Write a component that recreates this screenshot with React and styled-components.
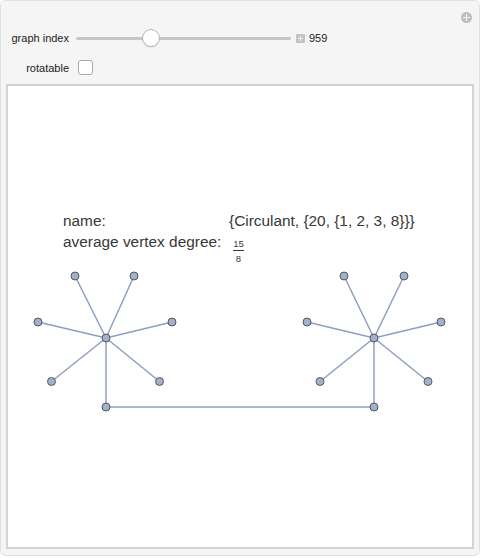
import React from "react";
import styled, { createGlobalStyle } from "styled-components";

const Global = createGlobalStyle`
  html, body { margin: 0; padding: 0; background: #ffffff; }
  body { font-family: "Liberation Sans", Arial, sans-serif; }
  * { box-sizing: border-box; }
`;

const Panel = styled.div`
  position: relative;
  width: 480px;
  height: 556px;
  border: 1px solid #e0e0e0;
  border-radius: 6px;
  background: #f5f5f5;
  padding-top: 28px;
  display: flex;
  flex-direction: column;
`;

const CloseIcon = styled.div`
  position: absolute;
  top: 11px;
  right: 7px;
  width: 11px;
  height: 11px;
  border-radius: 50%;
  background: #bdbdbd;
  display: flex;
  align-items: center;
  justify-content: center;
  &::before, &::after {
    content: "";
    position: absolute;
    background: #ffffff;
  }
  &::before { width: 7px; height: 1.6px; }
  &::after { width: 1.6px; height: 7px; }
`;

const ControlRow = styled.div`
  display: flex;
  align-items: center;
  height: ${(p) => p.$h}px;
  margin-bottom: ${(p) => p.$mb || 0}px;
`;

const Label = styled.div`
  width: 68px;
  text-align: right;
  font-size: 11px;
  color: #222;
`;

const Track = styled.div`
  position: relative;
  margin-left: 7px;
  width: 215px;
  height: 3px;
  border-radius: 2px;
  background: #c6c6c6;
`;

const Thumb = styled.div`
  position: absolute;
  top: 50%;
  width: 18px;
  height: 18px;
  margin-top: -9px;
  border-radius: 50%;
  background: #ffffff;
  border: 1px solid #b5b5b5;
  box-shadow: 0 1px 1px rgba(0, 0, 0, 0.08);
`;

const PlusBox = styled.div`
  position: relative;
  margin-left: 5px;
  width: 9px;
  height: 9px;
  border-radius: 1px;
  background: #c4c4c4;
  display: flex;
  align-items: center;
  justify-content: center;
  &::before, &::after {
    content: "";
    position: absolute;
    background: #f2f2f2;
  }
  &::before { width: 5px; height: 1px; }
  &::after { width: 1px; height: 5px; }
`;

const Value = styled.div`
  margin-left: 4px;
  font-size: 11px;
  color: #222;
`;

const Checkbox = styled.div`
  margin-left: 9px;
  width: 15px;
  height: 15px;
  border-radius: 3px;
  border: 1px solid #a9a9a9;
  background: #ffffff;
`;

const Output = styled.div`
  margin: 0 5px;
  height: 465px;
  border: 2px solid #d4d4d4;
  border-top-color: #d0d0d0;
  background: #ffffff;
  display: flex;
  flex-direction: column;
`;

const Info = styled.div`
  margin-top: 124px;
  margin-left: 55px;
  display: grid;
  grid-template-columns: 166px auto;
  grid-auto-rows: 21px;
  font-size: 15.4px;
  line-height: 21px;
  color: #383838;
`;

const Fraction = styled.div`
  display: inline-flex;
  flex-direction: column;
  align-items: center;
  margin-left: 4px;
  padding-top: 3px;
  font-size: 9.5px;
  line-height: 9px;
  width: 11px;
`;

const Bar = styled.div`
  align-self: stretch;
  height: 1px;
  background: #383838;
  margin: 2px 0 3px;
`;

const Graph = styled.svg`
  display: block;
  margin-top: 10px;
`;

const left = {
  c: [106, 338],
  leaves: [[75, 276], [134, 276], [38, 322], [172, 322], [51.5, 381.5], [159.5, 381.5]],
  b: [106, 407],
};
const right = {
  c: [374, 338],
  leaves: [[344, 276], [404, 276], [307, 322], [441, 322], [320, 381.5], [428, 381.5]],
  b: [374, 407],
};

function Star({ s }) {
  return (
    <g>
      {s.leaves.map((p, i) => (
        <line key={i} x1={s.c[0]} y1={s.c[1]} x2={p[0]} y2={p[1]} />
      ))}
      <line x1={s.c[0]} y1={s.c[1]} x2={s.b[0]} y2={s.b[1]} />
    </g>
  );
}

function Nodes({ s }) {
  const pts = [s.c, s.b, ...s.leaves];
  return pts.map((p, i) => <circle key={i} cx={p[0]} cy={p[1]} r={4} />);
}

export default function App() {
  const frac = 0.307;
  return (
    <>
      <Global />
      <Panel>
        <CloseIcon />
        <ControlRow $h={18} $mb={13}>
          <Label>graph index</Label>
          <Track>
            <Thumb style={{ left: `${frac * 215}px` }} />
          </Track>
          <PlusBox />
          <Value>959</Value>
        </ControlRow>
        <ControlRow $h={15} $mb={9}>
          <Label>rotatable</Label>
          <Checkbox />
        </ControlRow>
        <Output>
          <Info>
            <div>name:</div>
            <div>{"{Circulant, {20, {1, 2, 3, 8}}}"}</div>
            <div>average vertex degree:</div>
            <div>
              <Fraction>
                <span>15</span>
                <Bar />
                <span>8</span>
              </Fraction>
            </div>
          </Info>
          <Graph width="464" height="160" viewBox="8 262 464 160">
            <g stroke="#8d9fc2" strokeWidth="1.5" fill="none">
              <Star s={left} />
              <Star s={right} />
              <line x1={left.b[0]} y1={left.b[1]} x2={right.b[0]} y2={right.b[1]} />
            </g>
            <g fill="#a0b1ca" stroke="#4d4d4d" strokeWidth="0.9">
              <Nodes s={left} />
              <Nodes s={right} />
            </g>
          </Graph>
        </Output>
      </Panel>
    </>
  );
}
